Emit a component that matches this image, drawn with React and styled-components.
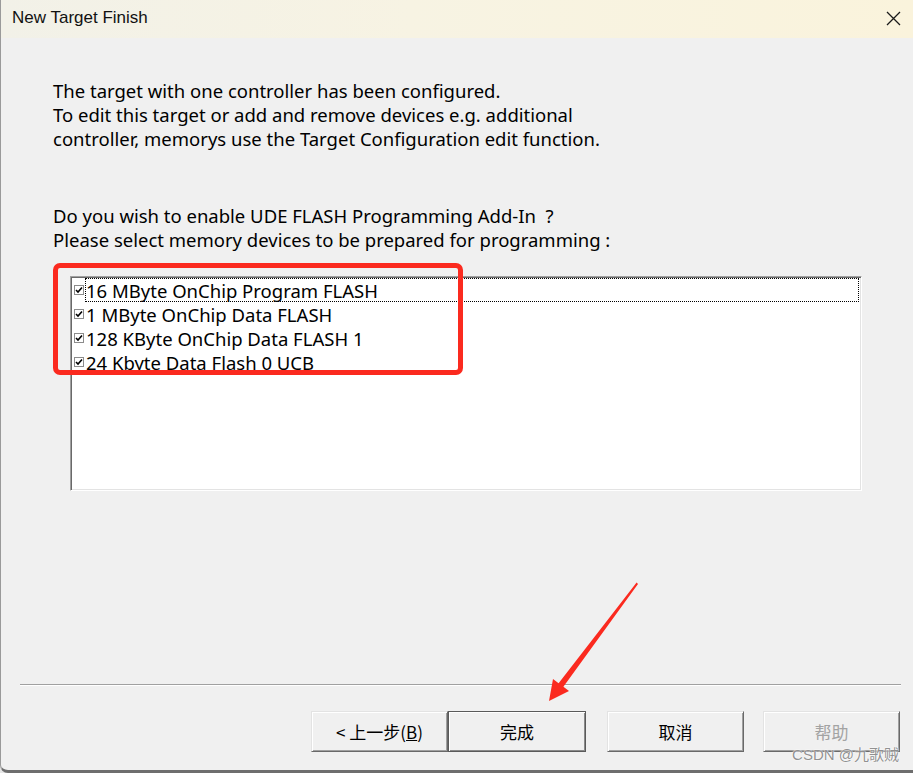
import React from 'react';
import styled, { createGlobalStyle } from 'styled-components';

const GlobalStyle = createGlobalStyle`
  html, body {
    margin: 0;
    padding: 0;
    background: #e6e6e6;
    overflow: hidden;
  }
  * {
    box-sizing: border-box;
  }
`;

const Window = styled.div`
  position: relative;
  width: 913px;
  height: 773px;
  display: flex;
  flex-direction: column;
  background: #f0f0f0;
  border-left: 1px solid #9a9a9a;
  border-bottom: 3px solid #6e6e6e;
  border-bottom-left-radius: 8px;
  font-family: "Noto Sans", "Noto Sans CJK SC", sans-serif;
  color: #000;
  overflow: hidden;
`;

const TitleBar = styled.div`
  height: 38px;
  flex: none;
  display: flex;
  align-items: center;
  justify-content: space-between;
  padding: 0 10px 2px 11px;
  background: linear-gradient(90deg, #f2f1e8 0%, #f7f3e3 45%, #faf3dc 100%);
`;

const Title = styled.span`
  font-family: "Liberation Sans", Arial, sans-serif;
  font-size: 17px;
  color: #111;
`;

const CloseButton = styled.button`
  width: 20px;
  height: 20px;
  padding: 0;
  border: none;
  background: transparent;
  display: flex;
  align-items: center;
  justify-content: center;
`;

const Body = styled.div`
  flex: 1;
  padding: 41px 0 0 52px;
  display: flex;
  flex-direction: column;
`;

const Paragraph = styled.p`
  margin: ${p => p.$gap}px 0 0 0;
  font-size: 18.5px;
  line-height: 24px;
  white-space: pre-wrap;
`;

const ListWrap = styled.div`
  position: relative;
  margin: 24px 0 0 17px;
  width: 792px;
  height: 215px;
`;

const ListBox = styled.div`
  width: 100%;
  height: 100%;
  background: #fff;
  border: 1px solid;
  border-color: #a0a0a0 #ffffff #ffffff #a0a0a0;
  box-shadow: inset 1px 1px #696969, inset -1px -1px #e3e3e3;
  padding: 1px 2px 0 2px;
`;

const Row = styled.div`
  height: 24px;
  display: flex;
  align-items: center;
  padding-left: 1px;
`;

const Check = styled.span`
  width: 10px;
  height: 10px;
  flex: none;
  border: 1px solid #8c8c8c;
  background: #fff;
  display: flex;
  align-items: center;
  justify-content: center;
  margin-right: 1px;
`;

const Label = styled.span`
  flex: 1;
  height: 24px;
  display: flex;
  align-items: center;
  font-size: 18.5px;
  padding-left: 0;
  white-space: nowrap;
  border: 1px dotted ${p => (p.$focused ? '#000' : 'transparent')};
`;

const Highlight = styled.div`
  position: absolute;
  left: -17px;
  top: -13px;
  width: 410px;
  height: 112px;
  border: 5px solid #fb2a1f;
  border-radius: 7px;
  pointer-events: none;
`;

const Separator = styled.div`
  flex: none;
  height: 2px;
  margin: 0 12px 0 19px;
  border-top: 1px solid #a0a0a0;
  border-bottom: 1px solid #ffffff;
`;

const ButtonRow = styled.div`
  flex: none;
  display: flex;
  padding: 25px 0 18px 310px;
`;

const Button = styled.button`
  width: ${p => p.$w}px;
  height: 41px;
  margin-left: ${p => p.$ml || 0}px;
  padding: 0;
  background: #f0f0f0;
  font-family: "Noto Sans CJK SC", "Noto Sans", sans-serif;
  font-size: 17px;
  white-space: pre;
  color: ${p => (p.disabled ? '#a3a3a3' : '#000')};
  border: 1px solid;
  border-color: ${p => (p.$primary ? '#5a5a5a' : '#e3e3e3 #696969 #696969 #e3e3e3')};
  box-shadow: ${p =>
    p.$primary
      ? 'inset 1px 1px #fff, inset -1px -1px #8a8a8a'
      : 'inset 1px 1px #fff, inset -1px -1px #a0a0a0'};
`;

const Underline = styled.span`
  text-decoration: underline;
`;

const Arrow = styled.svg`
  position: absolute;
  left: 540px;
  top: 575px;
  width: 105px;
  height: 135px;
  pointer-events: none;
`;

const Watermark = styled.span`
  position: absolute;
  right: 14px;
  bottom: 6px;
  font-family: "Liberation Sans", "Noto Sans CJK SC", sans-serif;
  font-size: 15px;
  color: rgba(125, 125, 125, 0.85);
  text-shadow: 0 0 2px #fff, 0 0 1px #fff;
  pointer-events: none;
`;

const devices = [
  '16 MByte OnChip Program FLASH',
  '1 MByte OnChip Data FLASH',
  '128 KByte OnChip Data FLASH 1',
  '24 Kbyte Data Flash 0 UCB',
];

const CheckMark = () => (
  <svg width="8" height="8" viewBox="0 0 8 8">
    <path d="M1 4 L3 6 L7 1.5" fill="none" stroke="#000" strokeWidth="1.6" />
  </svg>
);

export default function App() {
  return (
    <>
      <GlobalStyle />
      <Window>
        <TitleBar>
          <Title>New Target Finish</Title>
          <CloseButton aria-label="close">
            <svg width="15" height="15" viewBox="0 0 15 15">
              <path d="M1 1 L14 14 M14 1 L1 14" stroke="#1a1a1a" strokeWidth="1.3" />
            </svg>
          </CloseButton>
        </TitleBar>

        <Body>
          <Paragraph $gap={0}>
            {'The target with one controller has been configured.\nTo edit this target or add and remove devices e.g. additional\ncontroller, memorys use the Target Configuration edit function.'}
          </Paragraph>
          <Paragraph $gap={53}>
            {'Do you wish to enable UDE FLASH Programming Add-In  ?\nPlease select memory devices to be prepared for programming :'}
          </Paragraph>

          <ListWrap>
            <ListBox>
              {devices.map((d, i) => (
                <Row key={d}>
                  <Check>
                    <CheckMark />
                  </Check>
                  <Label $focused={i === 0}>{d}</Label>
                </Row>
              ))}
            </ListBox>
            <Highlight />
          </ListWrap>
        </Body>

        <Separator />

        <ButtonRow>
          <Button $w={137}>
            {'< 上一步('}<Underline>B</Underline>)
          </Button>
          <Button $w={138} $primary>完成</Button>
          <Button $w={137} $ml={21}>取消</Button>
          <Button $w={137} $ml={19} disabled>帮助</Button>
        </ButtonRow>

        <Arrow viewBox="540 575 105 135">
          <polygon
            points="637,584 562.4,686.8 568,691 548,701 552,679 557.6,683.2 635.6,582.6"
            fill="#fb2a1f"
          />
        </Arrow>

        <Watermark>CSDN @九歌贼</Watermark>
      </Window>
    </>
  );
}
